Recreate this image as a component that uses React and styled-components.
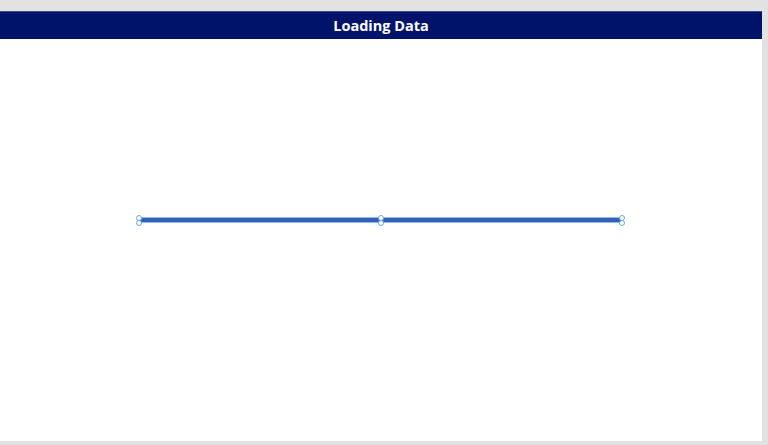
import React from 'react'
import styled, { createGlobalStyle } from 'styled-components'

const GlobalStyle = createGlobalStyle`
  html, body {
    margin: 0;
    padding: 0;
    background: #e2e2e2;
    font-family: "Open Sans", "Liberation Sans", sans-serif;
  }
`

const Page = styled.div`
  width: 768px;
  height: 445px;
  padding-top: 11px;
  box-sizing: border-box;
  overflow: hidden;
`

const Screen = styled.div`
  width: 762px;
  height: 430px;
  background: #ffffff;
  display: flex;
  flex-direction: column;
`

const Header = styled.div`
  height: 28px;
  background: #00136b;
  border-top: 1px solid #3b4a8f;
  box-sizing: border-box;
  display: flex;
  align-items: center;
  justify-content: center;
  color: #ffffff;
  font-size: 14.5px;
  font-weight: 700;
`

const Body = styled.div`
  flex: 1;
  padding: 178px 0 0 139px;
`

const Line = styled.div`
  position: relative;
  width: 483px;
  height: 6px;
  box-sizing: border-box;
  background: #3461b7;
  border-top: 1px solid #8dbbec;
  border-bottom: 1px solid #8dbbec;
`

const Handle = styled.div`
  position: absolute;
  top: -3px;
  left: ${p => p.$left};
  transform: translateX(-50%);
  width: 6px;
  display: flex;
  flex-direction: column;
`

const Dot = styled.span`
  display: block;
  width: 6px;
  height: 6px;
  box-sizing: border-box;
  border: 1px solid #6fa8e6;
  border-radius: 50%;
  background: #ffffff;
  margin-top: ${p => (p.$second ? '-1px' : '0')};
`

export default function App() {
  return (
    <Page>
      <GlobalStyle />
      <Screen>
        <Header>Loading Data</Header>
        <Body>
          <Line>
            {['0%', '50%', '100%'].map(pos => (
              <Handle key={pos} $left={pos}>
                <Dot />
                <Dot $second />
              </Handle>
            ))}
          </Line>
        </Body>
      </Screen>
    </Page>
  )
}
